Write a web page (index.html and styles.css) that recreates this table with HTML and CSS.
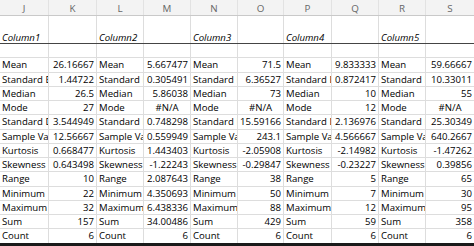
FILE: index.html
```html
<!DOCTYPE html>
<html>
<head>
<meta charset="utf-8">
<link rel="stylesheet" href="styles.css">
</head>
<body>
<div class="sheet">
  <div class="grid colhead">
    <div>J</div><div>K</div><div>L</div><div>M</div><div>N</div><div>O</div><div>P</div><div>Q</div><div>R</div><div>S</div>
  </div>
  <div class="grid titles">
    <div class="t">Column1</div><div></div>
    <div class="t">Column2</div><div></div>
    <div class="t">Column3</div><div></div>
    <div class="t">Column4</div><div></div>
    <div class="t">Column5</div><div></div>
  </div>
  <div class="grid data">
    <div></div><div></div><div></div><div></div><div></div><div></div><div></div><div></div><div></div><div></div>

    <div class="l">Mean</div><div class="n">26.16667</div><div class="l">Mean</div><div class="n">5.667477</div><div class="l">Mean</div><div class="n">71.5</div><div class="l">Mean</div><div class="n">9.833333</div><div class="l">Mean</div><div class="n">59.66667</div>

    <div class="l">Standard Error</div><div class="n">1.44722</div><div class="l">Standard Error</div><div class="n">0.305491</div><div class="l">Standard Error</div><div class="n">6.36527</div><div class="l">Standard Error</div><div class="n">0.872417</div><div class="l">Standard Error</div><div class="n">10.33011</div>

    <div class="l">Median</div><div class="n">26.5</div><div class="l">Median</div><div class="n">5.86038</div><div class="l">Median</div><div class="n">73</div><div class="l">Median</div><div class="n">10</div><div class="l">Median</div><div class="n">55</div>

    <div class="l">Mode</div><div class="n">27</div><div class="l">Mode</div><div class="e">#N/A</div><div class="l">Mode</div><div class="e">#N/A</div><div class="l">Mode</div><div class="n">12</div><div class="l">Mode</div><div class="e">#N/A</div>

    <div class="l">Standard Deviation</div><div class="n">3.544949</div><div class="l">Standard Deviation</div><div class="n">0.748298</div><div class="l">Standard Deviation</div><div class="n">15.59166</div><div class="l">Standard Deviation</div><div class="n">2.136976</div><div class="l">Standard Deviation</div><div class="n">25.30349</div>

    <div class="l">Sample Variance</div><div class="n">12.56667</div><div class="l">Sample Variance</div><div class="n">0.559949</div><div class="l">Sample Variance</div><div class="n">243.1</div><div class="l">Sample Variance</div><div class="n">4.566667</div><div class="l">Sample Variance</div><div class="n">640.2667</div>

    <div class="l">Kurtosis</div><div class="n">0.668477</div><div class="l">Kurtosis</div><div class="n">1.443403</div><div class="l">Kurtosis</div><div class="n">-2.05908</div><div class="l">Kurtosis</div><div class="n">-2.14982</div><div class="l">Kurtosis</div><div class="n">-1.47262</div>

    <div class="l">Skewness</div><div class="n">0.643498</div><div class="l">Skewness</div><div class="n">-1.22243</div><div class="l">Skewness</div><div class="n">-0.29847</div><div class="l">Skewness</div><div class="n">-0.23227</div><div class="l">Skewness</div><div class="n">0.39856</div>

    <div class="l">Range</div><div class="n">10</div><div class="l">Range</div><div class="n">2.087643</div><div class="l">Range</div><div class="n">38</div><div class="l">Range</div><div class="n">5</div><div class="l">Range</div><div class="n">65</div>

    <div class="l">Minimum</div><div class="n">22</div><div class="l">Minimum</div><div class="n">4.350693</div><div class="l">Minimum</div><div class="n">50</div><div class="l">Minimum</div><div class="n">7</div><div class="l">Minimum</div><div class="n">30</div>

    <div class="l">Maximum</div><div class="n">32</div><div class="l">Maximum</div><div class="n">6.438336</div><div class="l">Maximum</div><div class="n">88</div><div class="l">Maximum</div><div class="n">12</div><div class="l">Maximum</div><div class="n">95</div>

    <div class="l">Sum</div><div class="n">157</div><div class="l">Sum</div><div class="n">34.00486</div><div class="l">Sum</div><div class="n">429</div><div class="l">Sum</div><div class="n">59</div><div class="l">Sum</div><div class="n">358</div>

    <div class="l">Count</div><div class="n">6</div><div class="l">Count</div><div class="n">6</div><div class="l">Count</div><div class="n">6</div><div class="l">Count</div><div class="n">6</div><div class="l">Count</div><div class="n">6</div>
  </div>
  <div class="bottom"></div>
</div>
</body>
</html>
```
FILE: styles.css
```css
html, body {
  margin: 0;
  padding: 0;
  background: #ffffff;
}

.sheet {
  width: 474px;
  height: 246px;
  overflow: hidden;
  display: flex;
  flex-direction: column;
  font-family: "Open Sans", "Liberation Sans", sans-serif;
  font-size: 9.6px;
  color: #000;
}

.grid {
  display: grid;
  grid-template-columns: 48px 47px 46px 46px 46px 45px 47px 46px 46px 1fr;
  column-gap: 1px;
  background: #dddddd;
}

.grid > div {
  background: #ffffff;
  white-space: nowrap;
  overflow: hidden;
}

.colhead {
  height: 15px;
  border-bottom: 1px solid #c9c9c9;
  background: #e2e2e2;
}

.colhead > div {
  background: #f3f3f3;
  color: #666;
  font-size: 9.8px;
  text-align: center;
  line-height: 17px;
}

.titles {
  height: 27px;
  border-bottom: 1px solid #444444;
}

.titles > div {
  display: flex;
  align-items: flex-end;
  padding: 0 2px 0 2px;
  line-height: 11px;
}

.titles .t {
  font-style: italic;
}

.data {
  grid-auto-rows: 13.25px;
  row-gap: 1px;
}

.data > div {
  line-height: 13.25px;
  padding: 0 2px 0 2px;
}

.data .n {
  text-align: right;
}

.data .e {
  text-align: center;
}

.bottom {
  flex: 1;
  background: #1a1a1a;
}
```
